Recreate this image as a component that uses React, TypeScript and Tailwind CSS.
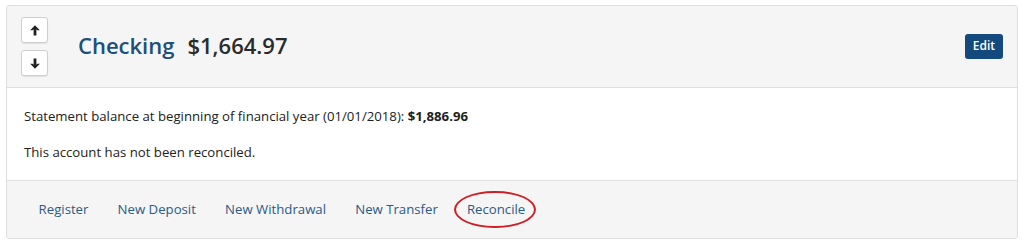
import React from 'react';

const links = ['Register', 'New Deposit', 'New Withdrawal', 'New Transfer', 'Reconcile'];

function ArrowButton({ dir }: { dir: 'up' | 'down' }) {
  return (
    <button className="w-[27px] h-[26px] flex items-center justify-center bg-white border border-[#cfcfcf] rounded-[3px] shadow-[0_1px_1px_rgba(0,0,0,0.08)]">
      <svg width="10" height="11" viewBox="0 0 10 11" className={dir === 'down' ? 'rotate-180' : ''}>
        <path d="M5 0.3 L9.8 5.2 L7.4 5.2 L6.4 4.2 L6.4 10.5 L3.6 10.5 L3.6 4.2 L2.6 5.2 L0.2 5.2 Z" fill="#222" />
      </svg>
    </button>
  );
}

export default function App() {
  return (
    <div className="w-[1024px] h-[244px] bg-white pt-[5px] pl-[6px] font-['Open_Sans',sans-serif]">
      <div className="w-[1012px] border border-[#dedede] rounded-[3px] overflow-hidden">
        {/* header */}
        <div className="h-[82px] bg-[#f5f5f5] border-b border-[#e0e0e0] flex items-center pl-[14px] pr-[14px]">
          <div className="flex flex-col gap-[7px]">
            <ArrowButton dir="up" />
            <ArrowButton dir="down" />
          </div>
          <div className="ml-[30px] flex items-baseline gap-[13px] -mt-[2px]">
            <span className="text-[22px] font-semibold text-[#1d4f7c]">Checking</span>
            <span className="text-[22px] font-semibold text-[#2b2b2b]">$1,664.97</span>
          </div>
          <button className="ml-auto h-[25px] px-[8px] rounded-[3px] bg-[#14497d] text-white text-[12px] font-semibold -mt-[1px]">
            Edit
          </button>
        </div>
        {/* body */}
        <div className="h-[93px] bg-white border-b border-[#e0e0e0] px-[17px] pt-[18px] text-[13.2px] text-[#222]">
          <p className="leading-[20px]">
            Statement balance at beginning of financial year (01/01/2018): <b className="font-bold">$1,886.96</b>
          </p>
          <p className="leading-[20px] mt-[16px]">This account has not been reconciled.</p>
        </div>
        {/* footer */}
        <div className="h-[57px] bg-[#f5f5f5] flex items-center pl-[17px]">
          {links.map((l) => (
            <a key={l} className="relative px-[14.6px] text-[13.2px] text-[#2a5a8a]">
              {l}
              {l === 'Reconcile' && (
                <span className="absolute left-[2px] top-[-9px] bottom-[-9px] w-[82px] border-2 border-[#cc1f26] rounded-[50%]" />
              )}
            </a>
          ))}
        </div>
      </div>
    </div>
  );
}
